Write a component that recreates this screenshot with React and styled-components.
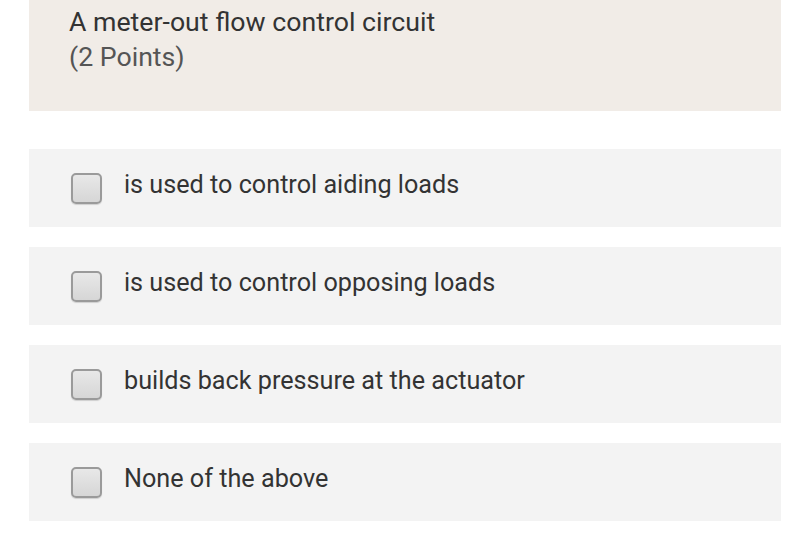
import React from 'react';
import styled, { createGlobalStyle } from 'styled-components';

const GlobalStyle = createGlobalStyle`
  html, body {
    margin: 0;
    padding: 0;
    background: #fff;
    font-family: Roboto, "Noto Sans", sans-serif;
  }
`;

const Page = styled.div`
  width: 810px;
  height: 545px;
  padding: 0 29px 0 29px;
  box-sizing: border-box;
  overflow: hidden;
`;

const Question = styled.div`
  background: #f1ece7;
  height: 111px;
  padding: 5px 40px 0;
  box-sizing: border-box;
  margin-bottom: 38px;
`;

const Title = styled.div`
  font-size: 26.7px;
  line-height: 35px;
  color: #333;
`;

const Points = styled.div`
  font-size: 26.7px;
  line-height: 35px;
  color: #555;
`;

const Options = styled.div`
  display: flex;
  flex-direction: column;
  gap: 20px;
`;

const Option = styled.label`
  display: flex;
  align-items: center;
  height: 78px;
  background: #f3f3f3;
  padding-left: 42px;
  box-sizing: border-box;
`;

const Box = styled.span`
  width: 27px;
  height: 27px;
  border: 2px solid #9a9a9a;
  border-radius: 5px;
  background: linear-gradient(#e8e8e8, #d6d6d6);
  box-shadow: 0 1px 1px rgba(0, 0, 0, 0.15);
  margin-right: 22px;
  flex-shrink: 0;
`;

const Label = styled.span`
  font-size: 25.2px;
  color: #333;
  margin-top: -8px;
`;

const answers = [
  'is used to control aiding loads',
  'is used to control opposing loads',
  'builds back pressure at the actuator',
  'None of the above',
];

export default function App() {
  return (
    <>
      <GlobalStyle />
      <Page>
        <Question>
          <Title>A meter-out flow control circuit</Title>
          <Points>(2 Points)</Points>
        </Question>
        <Options>
          {answers.map((a) => (
            <Option key={a}>
              <Box />
              <Label>{a}</Label>
            </Option>
          ))}
        </Options>
      </Page>
    </>
  );
}
